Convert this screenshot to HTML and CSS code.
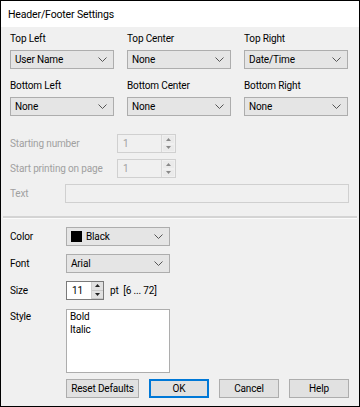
FILE: index.html
```html
<!DOCTYPE html>
<html>
<head>
<meta charset="utf-8">
<link rel="stylesheet" href="styles.css">
</head>
<body>
<div class="window">
  <div class="titlebar">Header/Footer Settings</div>
  <div class="content">
    <div class="pos-grid">
      <div class="cell"><div class="lbl">Top Left</div><div class="combo"><span>User Name</span><svg class="chev" width="9" height="5" viewBox="0 0 9 5"><polyline points="0.5,0.5 4.5,4.5 8.5,0.5" fill="none" stroke="#555" stroke-width="1"/></svg></div></div>
      <div class="cell"><div class="lbl">Top Center</div><div class="combo"><span>None</span><svg class="chev" width="9" height="5" viewBox="0 0 9 5"><polyline points="0.5,0.5 4.5,4.5 8.5,0.5" fill="none" stroke="#555" stroke-width="1"/></svg></div></div>
      <div class="cell"><div class="lbl">Top Right</div><div class="combo"><span>Date/Time</span><svg class="chev" width="9" height="5" viewBox="0 0 9 5"><polyline points="0.5,0.5 4.5,4.5 8.5,0.5" fill="none" stroke="#555" stroke-width="1"/></svg></div></div>
      <div class="cell"><div class="lbl">Bottom Left</div><div class="combo"><span>None</span><svg class="chev" width="9" height="5" viewBox="0 0 9 5"><polyline points="0.5,0.5 4.5,4.5 8.5,0.5" fill="none" stroke="#555" stroke-width="1"/></svg></div></div>
      <div class="cell"><div class="lbl">Bottom Center</div><div class="combo"><span>None</span><svg class="chev" width="9" height="5" viewBox="0 0 9 5"><polyline points="0.5,0.5 4.5,4.5 8.5,0.5" fill="none" stroke="#555" stroke-width="1"/></svg></div></div>
      <div class="cell"><div class="lbl">Bottom Right</div><div class="combo"><span>None</span><svg class="chev" width="9" height="5" viewBox="0 0 9 5"><polyline points="0.5,0.5 4.5,4.5 8.5,0.5" fill="none" stroke="#555" stroke-width="1"/></svg></div></div>
    </div>

    <div class="disabled-block">
      <div class="drow">
        <div class="dlbl wide">Starting number</div>
        <div class="spin dis"><span class="val">1</span><div class="arrows"><div class="arr"><svg width="5" height="3" viewBox="0 0 5 3"><polygon points="2.5,0 5,3 0,3" fill="#888"/></svg></div><div class="arr"><svg width="5" height="3" viewBox="0 0 5 3"><polygon points="0,0 5,0 2.5,3" fill="#888"/></svg></div></div></div>
      </div>
      <div class="drow">
        <div class="dlbl wide">Start printing on page</div>
        <div class="spin dis"><span class="val">1</span><div class="arrows"><div class="arr"><svg width="5" height="3" viewBox="0 0 5 3"><polygon points="2.5,0 5,3 0,3" fill="#888"/></svg></div><div class="arr"><svg width="5" height="3" viewBox="0 0 5 3"><polygon points="0,0 5,0 2.5,3" fill="#888"/></svg></div></div></div>
      </div>
      <div class="drow">
        <div class="dlbl narrow">Text</div>
        <div class="textbox"></div>
      </div>
    </div>

    <div class="sep"></div>

    <div class="font-block">
      <div class="frow">
        <div class="flbl">Color</div>
        <div class="combo fcombo"><span class="swatch"></span><span>Black</span><svg class="chev" width="9" height="5" viewBox="0 0 9 5"><polyline points="0.5,0.5 4.5,4.5 8.5,0.5" fill="none" stroke="#555" stroke-width="1"/></svg></div>
      </div>
      <div class="frow">
        <div class="flbl">Font</div>
        <div class="combo fcombo"><span>Arial</span><svg class="chev" width="9" height="5" viewBox="0 0 9 5"><polyline points="0.5,0.5 4.5,4.5 8.5,0.5" fill="none" stroke="#555" stroke-width="1"/></svg></div>
      </div>
      <div class="frow">
        <div class="flbl">Size</div>
        <div class="spin size"><span class="val">11</span><div class="arrows"><div class="arr"><svg width="5" height="3" viewBox="0 0 5 3"><polygon points="2.5,0 5,3 0,3" fill="#222"/></svg></div><div class="arr"><svg width="5" height="3" viewBox="0 0 5 3"><polygon points="0,0 5,0 2.5,3" fill="#222"/></svg></div></div></div>
        <div class="unit">pt&nbsp;&nbsp;[6 ... 72]</div>
      </div>
      <div class="frow style-row">
        <div class="flbl">Style</div>
        <div class="listbox"><div>Bold</div><div>Italic</div></div>
      </div>
    </div>

    <div class="buttons">
      <div class="btn reset">Reset Defaults</div>
      <div class="btn ok">OK</div>
      <div class="btn">Cancel</div>
      <div class="btn">Help</div>
    </div>
  </div>
</div>
</body>
</html>
```

FILE: styles.css
```css
* { box-sizing: border-box; }
html, body { margin: 0; padding: 0; background: #fff; }
.window {
  width: 360px;
  height: 407px;
  border: 1px solid #000;
  background: #f0f0f0;
  font-family: Roboto, "Noto Sans", sans-serif;
  font-size: 10px;
  letter-spacing: -0.15px;
  color: #000;
  display: flex;
  flex-direction: column;
  white-space: nowrap;
  overflow: hidden;
}
.titlebar {
  height: 26px;
  flex: 0 0 26px;
  background: #fff;
  padding-left: 7px;
  display: flex;
  align-items: center;
  font-size: 10.5px;
}
.content {
  padding: 4px 0 0 9px;
  display: flex;
  flex-direction: column;
}
.pos-grid {
  display: grid;
  grid-template-columns: 104px 104px 104px;
  column-gap: 13px;
  row-gap: 9px;
}
.cell { display: flex; flex-direction: column; }
.lbl { height: 16px; line-height: 16px; margin-bottom: 3px; }
.combo {
  height: 19px;
  background: #e5e5e5;
  border: 1px solid #adadad;
  display: flex;
  align-items: center;
  padding: 0 6px 0 4px;
}
.combo span { flex: 0 0 auto; }
.chev { margin-left: auto; flex: 0 0 auto; }

.disabled-block {
  margin-top: 18px;
  display: flex;
  flex-direction: column;
  gap: 6px;
}
.drow { display: flex; align-items: center; height: 19px; }
.dlbl { color: #a0a0a0; }
.dlbl.wide { width: 107px; }
.dlbl.narrow { width: 55px; }
.spin {
  display: flex;
  height: 19px;
  border: 1px solid #d0d0d0;
  background: #f0f0f0;
}
.spin.dis { width: 59px; }
.spin .val { flex: 1; padding-left: 5px; line-height: 17px; }
.spin.dis .val { color: #a0a0a0; }
.arrows {
  width: 14px;
  display: flex;
  flex-direction: column;
  border-left: 1px solid #d8d8d8;
}
.arr {
  flex: 1;
  display: flex;
  align-items: center;
  justify-content: center;
  background: #eaeaea;
  margin: 1px;
}
.textbox {
  width: 284px;
  height: 19px;
  border: 1px solid #d0d0d0;
  background: #f0f0f0;
}
.sep {
  margin: 13px 0 0 -7px;
  width: 354px;
  background: #d4d4d4;
  border-bottom: 1px solid #fbfbfb;
  height: 3px;
}
.font-block {
  margin-top: 8px;
  display: flex;
  flex-direction: column;
  gap: 8px;
}
.frow { display: flex; align-items: center; height: 19px; }
.flbl { width: 56px; }
.fcombo { width: 104px; padding-left: 4px; }
.swatch {
  width: 11px;
  height: 11px;
  background: #000;
  margin-right: 4px;
}
.spin.size {
  width: 38px;
  border-color: #7a7a7a;
  background: #fff;
}
.spin.size .val { padding-left: 5px; }
.spin.size .arrows { width: 12px; border-left: 1px solid #d0d0d0; }
.spin.size .arr { background: #e1e1e1; margin: 0; border-bottom: 1px solid #c8c8c8; }
.unit { margin-left: 6px; }
.style-row { align-items: flex-start; height: 64px; margin-top: 1px; }
.style-row .flbl { line-height: 16px; }
.listbox {
  width: 104px;
  height: 64px;
  background: #fff;
  border: 1px solid #adadad;
  padding: 0 3px;
  line-height: 13px;
}
.buttons {
  margin-top: 6px;
  margin-left: 56px;
  display: flex;
  gap: 10px;
}
.btn {
  width: 60px;
  height: 19px;
  background: #e1e1e1;
  border: 1px solid #adadad;
  display: flex;
  align-items: center;
  justify-content: center;
}
.btn.reset { width: 73px; }
.btn.ok { border: 2px solid #0078d7; }
```
